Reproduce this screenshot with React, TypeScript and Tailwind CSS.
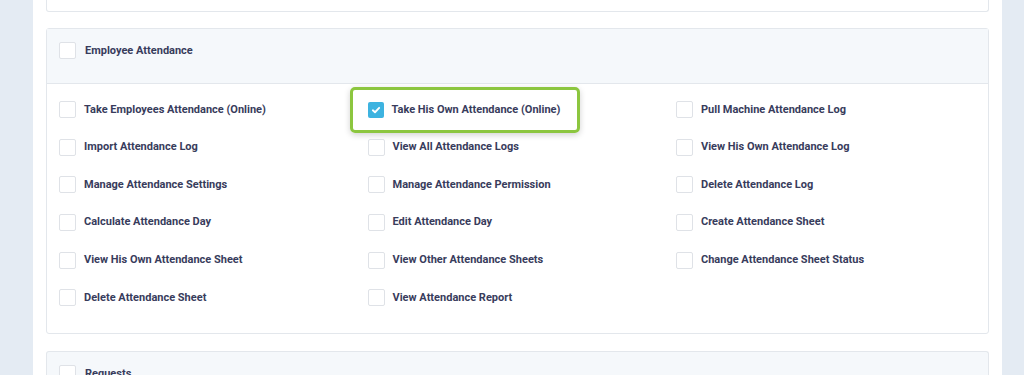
import React from 'react'

const items = [
    "Take Employees Attendance (Online)",
    "Take His Own Attendance (Online)",
    "Pull Machine Attendance Log",
    "Import Attendance Log",
    "View All Attendance Logs",
    "View His Own Attendance Log",
    "Manage Attendance Settings",
    "Manage Attendance Permission",
    "Delete Attendance Log",
    "Calculate Attendance Day",
    "Edit Attendance Day",
    "Create Attendance Sheet",
    "View His Own Attendance Sheet",
    "View Other Attendance Sheets",
    "Change Attendance Sheet Status",
    "Delete Attendance Sheet",
    "View Attendance Report",
];

const Box: React.FC<{ checked?: boolean }> = ({ checked }) => {
    if (checked) {
        return (
            <span className="flex h-[16px] w-[16px] shrink-0 items-center justify-center rounded-[2px] bg-[#3db3e0]">
                <svg viewBox="0 0 12 12" className="h-[10px] w-[10px]">
                    <path d="M2.2 6.3 L4.8 8.7 L9.8 3.4" fill="none" stroke="white" strokeWidth="2.2" strokeLinecap="round" strokeLinejoin="round" />
                </svg>
            </span>
        );
    }
    return <span className="h-[17px] w-[17px] shrink-0 rounded-[2px] border border-[#dfe2e7] bg-white" />;
}

export default function App() {
    return (
        <div className="flex h-[375px] w-[1024px] overflow-hidden bg-white" style={{ fontFamily: 'Roboto, "Liberation Sans", sans-serif' }}>
            <div className="w-[33px] shrink-0 bg-[#e4ebf3]" />

            <div className="flex-1 px-[13px]">
                <div className="h-[12px] rounded-b-[3px] border border-t-0 border-[#e3e7ec]" />

                <div className="mt-[16px] rounded-[3px] border border-[#e3e7ec]">
                    <div className="flex h-[55px] items-start gap-[9px] border-b border-[#e3e7ec] bg-[#f5f8fb] pl-[12px] pt-[13px]">
                        <Box />
                        <span className="text-[11px] font-bold leading-[17px] text-[#383c5c]">Employee Attendance</span>
                    </div>

                    <div className="grid grid-cols-[308.5px_308.5px_1fr] pb-[16px] pl-[12px] pt-[7px]">
                        {items.map((label, i) => (
                            <div key={label} className="relative flex h-[37.6px] items-center gap-[8px]">
                                {i === 1 && (
                                    <span className="absolute left-[-18px] top-[-4px] h-[46px] w-[230px] rounded-[5px] border-[3px] border-[#8cc63f] shadow-[0_2px_6px_rgba(0,0,0,0.18)]" />
                                )}
                                <Box checked={i === 1} />
                                <span className="relative text-[11px] font-bold text-[#383c5c]">{label}</span>
                            </div>
                        ))}
                    </div>
                </div>

                <div className="mt-[17px] rounded-t-[3px] border border-b-0 border-[#e3e7ec] bg-[#f5f8fb]">
                    <div className="flex h-[55px] items-start gap-[9px] pl-[12px] pt-[13px]">
                        <Box />
                        <span className="text-[11px] font-bold leading-[17px] text-[#383c5c]">Requests</span>
                    </div>
                </div>
            </div>

            <div className="w-[22px] shrink-0 bg-[#e4ebf3]" />
        </div>
    );
}
